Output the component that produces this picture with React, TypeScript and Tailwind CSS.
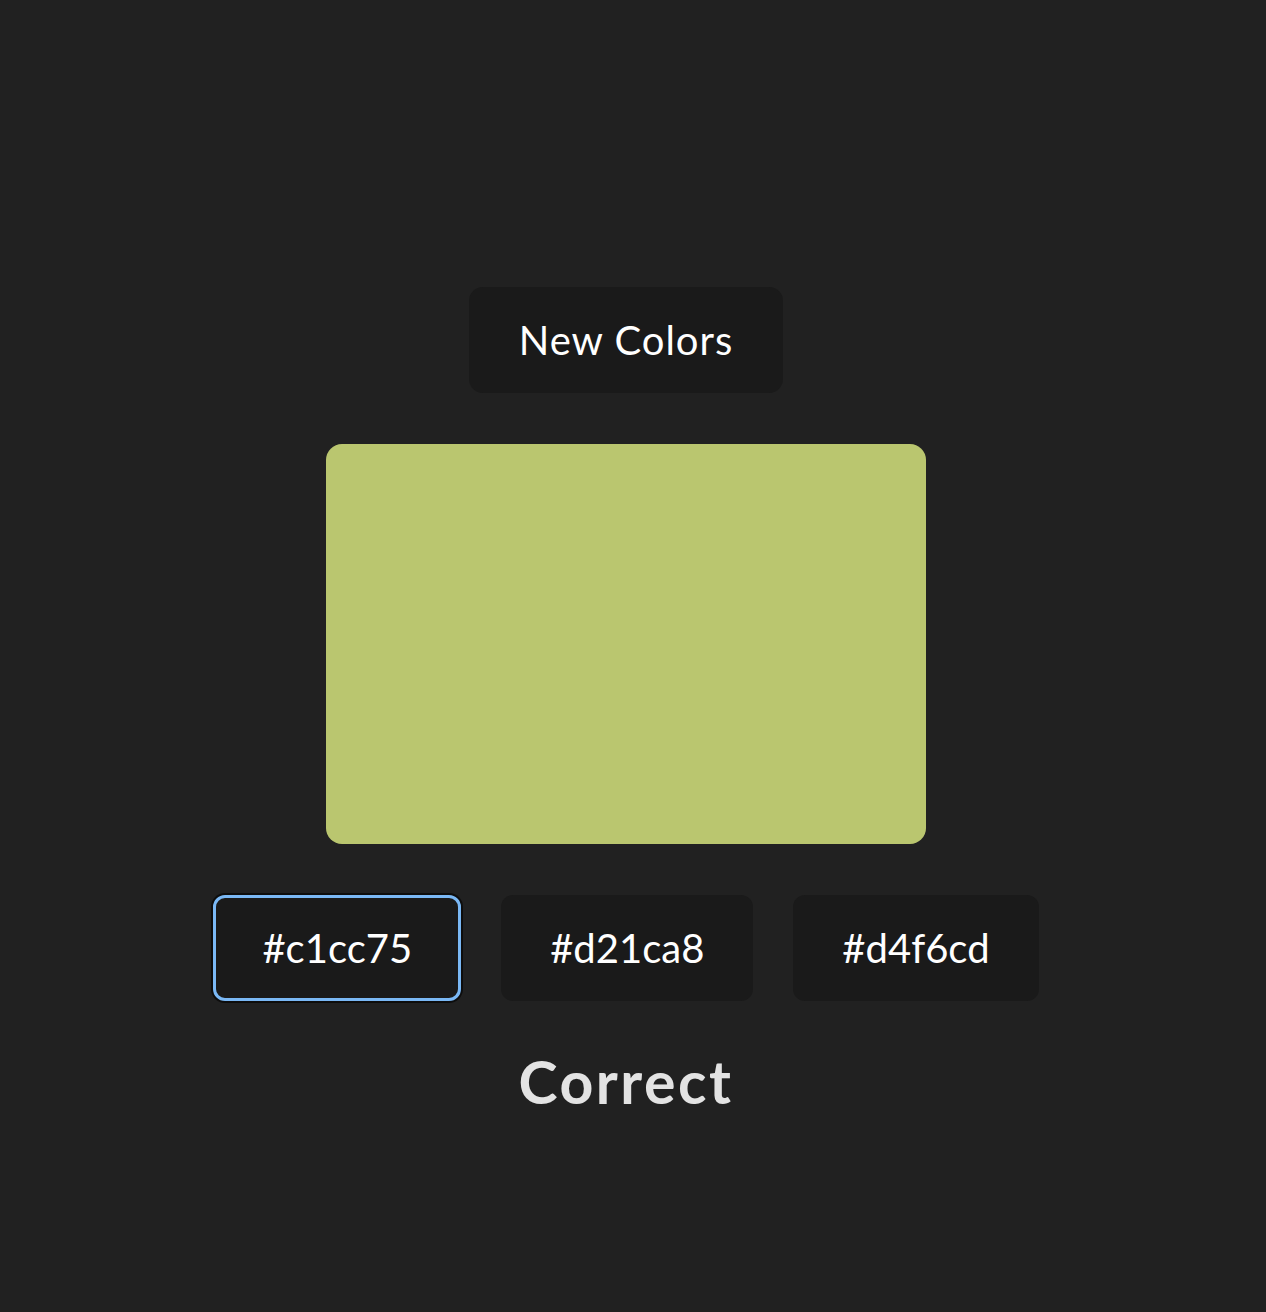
import React, { useState } from 'react';

const options = ['#c1cc75', '#d21ca8', '#d4f6cd'];

export default function App() {
    const [selected] = useState(0);

    return (
        <div
            className="min-h-[1312px] w-full bg-[#212121] flex flex-col items-center pt-[287px] pr-[14px] text-white"
            style={{ fontFamily: 'Lato, "Noto Sans", sans-serif' }}
        >
            {/* New colors button */}
            <button className="h-[106px] w-[314px] rounded-[14px] bg-[#1a1a1a] text-[40px] leading-none tracking-[1px] text-white flex items-center justify-center">
                New Colors
            </button>

            {/* Swatch */}
            <div className="mt-[51px] w-[600px] h-[400px] rounded-[16px] bg-[#bac66f]" />

            {/* Guesses */}
            <div className="mt-[51px] flex items-center gap-[40px]">
                {options.map((hex, i) => (
                    <button
                        key={hex}
                        className={`h-[106px] px-[46px] rounded-[12px] bg-[#1a1a1a] text-[40px] leading-none text-white flex items-center justify-center ${i === selected
                            ? 'border-[3px] border-[#7ab8f5] ring-2 ring-black/60'
                            : 'border-[3px] border-transparent'
                            }`}
                    >
                        {hex}
                    </button>
                ))}
            </div>

            <div className="mt-[46px] text-[59px] font-bold leading-[70px] tracking-[2.5px] text-[#e3e3e3]">
                Correct
            </div>
        </div>
    );
}
